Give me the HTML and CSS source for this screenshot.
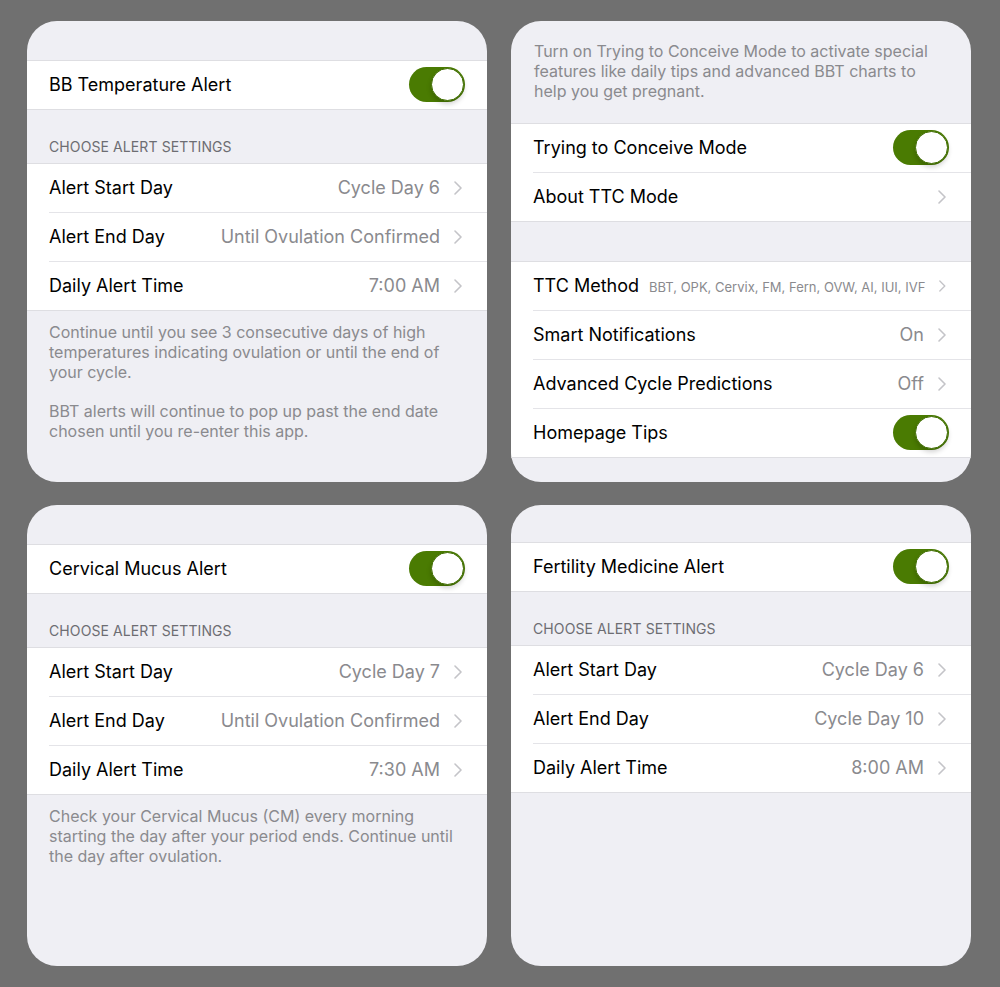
FILE: index.html
```html
<!DOCTYPE html>
<html lang="en">
  <head>
    <meta charset="UTF-8" />
    <meta name="viewport" content="width=device-width, initial-scale=1.0" />
    <title>Fertility Alert Settings</title>
    <link rel="stylesheet" href="styles.css">
  </head>
  <body>
    <div class="screens">

      <!-- BBT alert -->
      <div class="card">
        <div class="top-space"></div>
        <div class="group">
          <div class="row">
            <div class="row-inner">
              <span class="label">BB Temperature Alert</span>
              <span class="toggle on"><span class="knob"></span></span>
            </div>
          </div>
        </div>
        <div class="section-header">Choose Alert Settings</div>
        <div class="group">
          <div class="row">
            <div class="row-inner">
              <span class="label">Alert Start Day</span>
              <span class="value">Cycle Day 6</span>
              <svg class="chevron" viewBox="0 0 8 14"><path d="M1 1l6 6-6 6"/></svg>
            </div>
          </div>
          <div class="row">
            <div class="row-inner">
              <span class="label">Alert End Day</span>
              <span class="value">Until Ovulation Confirmed</span>
              <svg class="chevron" viewBox="0 0 8 14"><path d="M1 1l6 6-6 6"/></svg>
            </div>
          </div>
          <div class="row">
            <div class="row-inner">
              <span class="label">Daily Alert Time</span>
              <span class="value">7:00 AM</span>
              <svg class="chevron" viewBox="0 0 8 14"><path d="M1 1l6 6-6 6"/></svg>
            </div>
          </div>
        </div>
        <div class="footnote">
          <p>Continue until you see 3 consecutive days of high temperatures indicating ovulation or until the end of your cycle.</p>
          <p>BBT alerts will continue to pop up past the end date chosen until you re-enter this app.</p>
        </div>
      </div>

      <!-- TTC mode -->
      <div class="card">
        <div class="intro">Turn on Trying to Conceive Mode to activate special features like daily tips and advanced BBT charts to help you get pregnant.</div>
        <div class="group">
          <div class="row">
            <div class="row-inner">
              <span class="label">Trying to Conceive Mode</span>
              <span class="toggle on"><span class="knob"></span></span>
            </div>
          </div>
          <div class="row">
            <div class="row-inner">
              <span class="label">About TTC Mode</span>
              <span class="value"></span>
              <svg class="chevron" viewBox="0 0 8 14"><path d="M1 1l6 6-6 6"/></svg>
            </div>
          </div>
        </div>
        <div class="gap"></div>
        <div class="group">
          <div class="row">
            <div class="row-inner">
              <span class="label">TTC Method</span>
              <span class="value small">BBT, OPK, Cervix, FM, Fern, OVW, AI, IUI, IVF</span>
              <svg class="chevron" viewBox="0 0 8 14"><path d="M1 1l6 6-6 6"/></svg>
            </div>
          </div>
          <div class="row">
            <div class="row-inner">
              <span class="label">Smart Notifications</span>
              <span class="value">On</span>
              <svg class="chevron" viewBox="0 0 8 14"><path d="M1 1l6 6-6 6"/></svg>
            </div>
          </div>
          <div class="row">
            <div class="row-inner">
              <span class="label">Advanced Cycle Predictions</span>
              <span class="value">Off</span>
              <svg class="chevron" viewBox="0 0 8 14"><path d="M1 1l6 6-6 6"/></svg>
            </div>
          </div>
          <div class="row">
            <div class="row-inner">
              <span class="label">Homepage Tips</span>
              <span class="toggle on"><span class="knob"></span></span>
            </div>
          </div>
        </div>
      </div>

      <!-- Cervical mucus alert -->
      <div class="card">
        <div class="top-space"></div>
        <div class="group">
          <div class="row">
            <div class="row-inner">
              <span class="label">Cervical Mucus Alert</span>
              <span class="toggle on"><span class="knob"></span></span>
            </div>
          </div>
        </div>
        <div class="section-header">Choose Alert Settings</div>
        <div class="group">
          <div class="row">
            <div class="row-inner">
              <span class="label">Alert Start Day</span>
              <span class="value">Cycle Day 7</span>
              <svg class="chevron" viewBox="0 0 8 14"><path d="M1 1l6 6-6 6"/></svg>
            </div>
          </div>
          <div class="row">
            <div class="row-inner">
              <span class="label">Alert End Day</span>
              <span class="value">Until Ovulation Confirmed</span>
              <svg class="chevron" viewBox="0 0 8 14"><path d="M1 1l6 6-6 6"/></svg>
            </div>
          </div>
          <div class="row">
            <div class="row-inner">
              <span class="label">Daily Alert Time</span>
              <span class="value">7:30 AM</span>
              <svg class="chevron" viewBox="0 0 8 14"><path d="M1 1l6 6-6 6"/></svg>
            </div>
          </div>
        </div>
        <div class="footnote">
          <p>Check your Cervical Mucus (CM) every morning starting the day after your period ends. Continue until the day after ovulation.</p>
        </div>
      </div>

      <!-- Fertility medicine alert -->
      <div class="card">
        <div class="top-space short"></div>
        <div class="group">
          <div class="row">
            <div class="row-inner">
              <span class="label">Fertility Medicine Alert</span>
              <span class="toggle on"><span class="knob"></span></span>
            </div>
          </div>
        </div>
        <div class="section-header">Choose Alert Settings</div>
        <div class="group">
          <div class="row">
            <div class="row-inner">
              <span class="label">Alert Start Day</span>
              <span class="value">Cycle Day 6</span>
              <svg class="chevron" viewBox="0 0 8 14"><path d="M1 1l6 6-6 6"/></svg>
            </div>
          </div>
          <div class="row">
            <div class="row-inner">
              <span class="label">Alert End Day</span>
              <span class="value">Cycle Day 10</span>
              <svg class="chevron" viewBox="0 0 8 14"><path d="M1 1l6 6-6 6"/></svg>
            </div>
          </div>
          <div class="row">
            <div class="row-inner">
              <span class="label">Daily Alert Time</span>
              <span class="value">8:00 AM</span>
              <svg class="chevron" viewBox="0 0 8 14"><path d="M1 1l6 6-6 6"/></svg>
            </div>
          </div>
        </div>
      </div>

    </div>
  </body>
</html>
```

FILE: styles.css
```css
* {
  box-sizing: border-box;
}
body {
  margin: 0;
  background: #707070;
  font-family: Inter, "Noto Sans", sans-serif;
  -webkit-font-smoothing: antialiased;
}
.screens {
  display: grid;
  grid-template-columns: 460px 460px;
  grid-auto-rows: 461px;
  column-gap: 24px;
  row-gap: 23px;
  padding: 21px 0 0 27px;
}
.card {
  background: #efeff4;
  border-radius: 30px;
  overflow: hidden;
}
.top-space {
  height: 39px;
}
.top-space.short {
  height: 37px;
}
.gap {
  height: 39px;
}
.group {
  background: #ffffff;
  border-top: 1px solid #dedee2;
  border-bottom: 1px solid #dedee2;
}
.row {
  padding-left: 22px;
}
.row-inner {
  display: flex;
  align-items: center;
  height: 48px;
  padding-right: 22px;
  padding-bottom: 1px;
}
.row + .row .row-inner {
  height: 49px;
  border-top: 1px solid #e4e4e8;
}
.label {
  font-size: 18px;
  color: #000000;
  white-space: nowrap;
}
.value {
  flex: 1;
  text-align: right;
  font-size: 18px;
  color: #8a8a8e;
  white-space: nowrap;
}
.value.small {
  font-size: 13px;
  padding-left: 10px;
  padding-top: 2px;
}
/* Disclosure arrow */
.chevron {
  width: 8px;
  height: 14px;
  margin-left: 14px;
  margin-right: 3px;
  fill: none;
  stroke: #c4c4c8;
  stroke-width: 1.6;
  stroke-linecap: round;
  stroke-linejoin: round;
}
/* iOS style switch */
.toggle {
  margin-left: auto;
  width: 56px;
  height: 35px;
  border-radius: 18px;
  background: #4a7b02;
  position: relative;
}
.knob {
  position: absolute;
  top: 1px;
  right: 1px;
  width: 33px;
  height: 33px;
  border-radius: 50%;
  background: #ffffff;
  border: 1.5px solid #3f6d00;
  box-shadow: 0 3px 5px rgba(0, 0, 0, 0.18);
}
.section-header {
  padding: 28px 22px 7px;
  font-size: 14px;
  line-height: 18px;
  text-transform: uppercase;
  color: #6d6d72;
  letter-spacing: 0.1px;
}
.footnote {
  padding: 11px 24px 0 22px;
  font-size: 16px;
  line-height: 20px;
  color: #8a8a8e;
}
.footnote p {
  margin: 0 0 19px;
}
.intro {
  padding: 20px 24px 22px 23px;
  font-size: 16px;
  line-height: 20px;
  color: #8a8a8e;
}
```
